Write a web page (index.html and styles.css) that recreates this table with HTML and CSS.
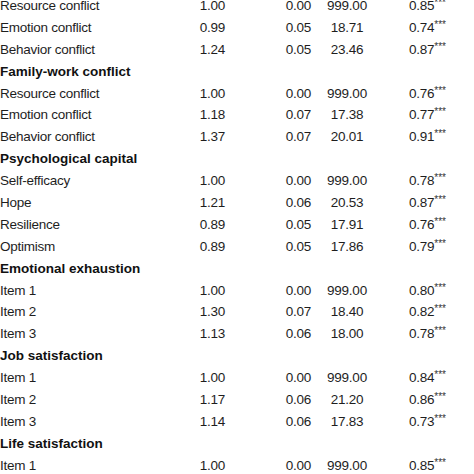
FILE: index.html
```html
<!DOCTYPE html>
<html>
<head>
<meta charset="utf-8">
<link rel="stylesheet" href="styles.css">
</head>
<body>
<div class="table">
  <div class="row"><span class="label">Resource conflict</span><span class="c1">1.00</span><span class="c2">0.00</span><span class="c3">999.00</span><span class="c4">0.85<sup>***</sup></span></div>
  <div class="row"><span class="label">Emotion conflict</span><span class="c1">0.99</span><span class="c2">0.05</span><span class="c3">18.71</span><span class="c4">0.74<sup>***</sup></span></div>
  <div class="row"><span class="label">Behavior conflict</span><span class="c1">1.24</span><span class="c2">0.05</span><span class="c3">23.46</span><span class="c4">0.87<sup>***</sup></span></div>
  <div class="row head"><span class="label">Family-work conflict</span></div>
  <div class="row"><span class="label">Resource conflict</span><span class="c1">1.00</span><span class="c2">0.00</span><span class="c3">999.00</span><span class="c4">0.76<sup>***</sup></span></div>
  <div class="row"><span class="label">Emotion conflict</span><span class="c1">1.18</span><span class="c2">0.07</span><span class="c3">17.38</span><span class="c4">0.77<sup>***</sup></span></div>
  <div class="row"><span class="label">Behavior conflict</span><span class="c1">1.37</span><span class="c2">0.07</span><span class="c3">20.01</span><span class="c4">0.91<sup>***</sup></span></div>
  <div class="row head"><span class="label">Psychological capital</span></div>
  <div class="row"><span class="label">Self-efficacy</span><span class="c1">1.00</span><span class="c2">0.00</span><span class="c3">999.00</span><span class="c4">0.78<sup>***</sup></span></div>
  <div class="row"><span class="label">Hope</span><span class="c1">1.21</span><span class="c2">0.06</span><span class="c3">20.53</span><span class="c4">0.87<sup>***</sup></span></div>
  <div class="row"><span class="label">Resilience</span><span class="c1">0.89</span><span class="c2">0.05</span><span class="c3">17.91</span><span class="c4">0.76<sup>***</sup></span></div>
  <div class="row"><span class="label">Optimism</span><span class="c1">0.89</span><span class="c2">0.05</span><span class="c3">17.86</span><span class="c4">0.79<sup>***</sup></span></div>
  <div class="row head"><span class="label">Emotional exhaustion</span></div>
  <div class="row"><span class="label">Item 1</span><span class="c1">1.00</span><span class="c2">0.00</span><span class="c3">999.00</span><span class="c4">0.80<sup>***</sup></span></div>
  <div class="row"><span class="label">Item 2</span><span class="c1">1.30</span><span class="c2">0.07</span><span class="c3">18.40</span><span class="c4">0.82<sup>***</sup></span></div>
  <div class="row"><span class="label">Item 3</span><span class="c1">1.13</span><span class="c2">0.06</span><span class="c3">18.00</span><span class="c4">0.78<sup>***</sup></span></div>
  <div class="row head"><span class="label">Job satisfaction</span></div>
  <div class="row"><span class="label">Item 1</span><span class="c1">1.00</span><span class="c2">0.00</span><span class="c3">999.00</span><span class="c4">0.84<sup>***</sup></span></div>
  <div class="row"><span class="label">Item 2</span><span class="c1">1.17</span><span class="c2">0.06</span><span class="c3">21.20</span><span class="c4">0.86<sup>***</sup></span></div>
  <div class="row"><span class="label">Item 3</span><span class="c1">1.14</span><span class="c2">0.06</span><span class="c3">17.83</span><span class="c4">0.73<sup>***</sup></span></div>
  <div class="row head"><span class="label">Life satisfaction</span></div>
  <div class="row"><span class="label">Item 1</span><span class="c1">1.00</span><span class="c2">0.00</span><span class="c3">999.00</span><span class="c4">0.85<sup>***</sup></span></div>
</div>
</body>
</html>
```

FILE: styles.css
```css
html, body {
  margin: 0;
  padding: 0;
  background: #ffffff;
  overflow: hidden;
}
.table {
  margin-top: -5px;
  font-family: "Liberation Sans", Arial, sans-serif;
  font-size: 13.5px;
  letter-spacing: -0.25px;
  color: #1e1e1e;
}
.row {
  display: grid;
  grid-template-columns: 180px 45px 86px 72px 1fr;
  height: 21.9px;
  line-height: 21.9px;
  white-space: nowrap;
}
.head .label {
  font-weight: bold;
  letter-spacing: 0;
  color: #111111;
}
.c1, .c2 {
  text-align: right;
}
.c3 {
  text-align: center;
}
.c4 {
  padding-left: 26px;
}
sup {
  font-size: 10px;
  letter-spacing: 0;
  line-height: 0;
  vertical-align: 4px;
  color: #333333;
}
```
